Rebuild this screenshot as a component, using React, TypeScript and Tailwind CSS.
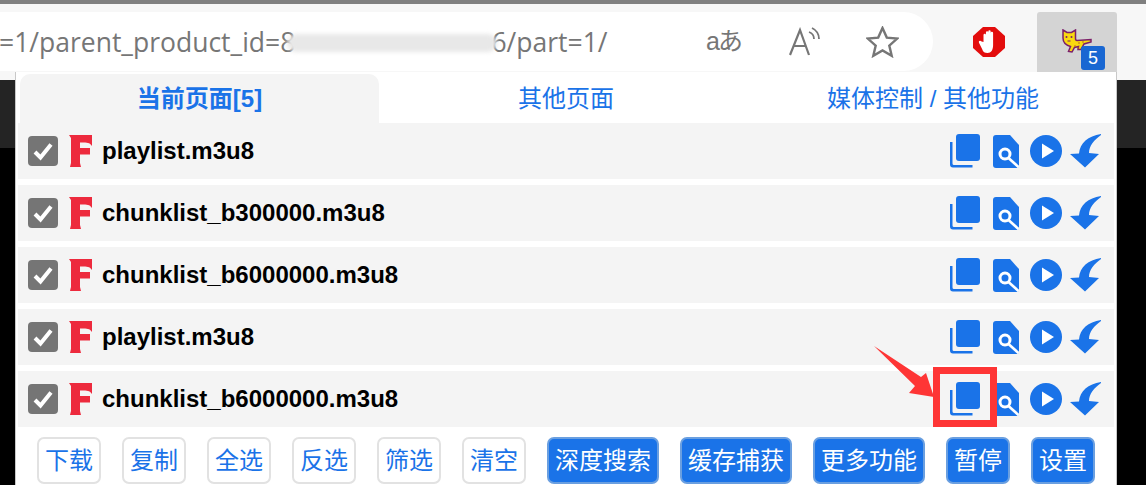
const rows = [
  "playlist.m3u8",
  "chunklist_b300000.m3u8",
  "chunklist_b6000000.m3u8",
  "playlist.m3u8",
  "chunklist_b6000000.m3u8",
];

const lightButtons = ["下载", "复制", "全选", "反选", "筛选", "清空"];
const blueButtons = [
  { label: "深度搜索", width: "w-[112px]" },
  { label: "缓存捕获", width: "w-[112px]" },
  { label: "更多功能", width: "w-[112px]" },
  { label: "暂停", width: "w-[64px]" },
  { label: "设置", width: "w-[64px]" },
];

function CopyIcon() {
  return (
    <svg width="30" height="34" viewBox="0 0 30 34" fill="#1a73e8">
      <rect x="6" y="0" width="24" height="27" rx="3" />
      <path d="M0 8h2.500v21.500a1.500 1.500 0 0 0 1.500 1.500h18.500v2.500H3a3 3 0 0 1-3-3z" />
    </svg>
  );
}

function SearchFileIcon() {
  return (
    <svg width="26" height="33" viewBox="0 0 26 33">
      <path d="M3 0h14l9 10v20a3 3 0 0 1-3 3H3a3 3 0 0 1-3-3V3a3 3 0 0 1 3-3z" fill="#1a73e8" />
      <circle cx="12" cy="19" r="5" fill="none" stroke="#fff" strokeWidth="3" />
      <path d="M15.500 23l10 9" stroke="#fff" strokeWidth="2.600" />
    </svg>
  );
}

function PlayIcon() {
  return (
    <svg width="32" height="32" viewBox="0 0 32 32">
      <circle cx="16" cy="16" r="16" fill="#1a73e8" />
      <path d="M12 8.500l12 7.500-12 7.500z" fill="#fff" />
    </svg>
  );
}

function SendIcon() {
  return (
    <svg width="32" height="34" viewBox="0 0 32 34" fill="#1a73e8">
      <path d="M31 0C18 2 10 9 9 19.500L0 20 15 33.500 29 20 19 19C19 12 24 6 31 1z" />
    </svg>
  );
}

function FileBadge() {
  return (
    <svg width="23" height="32" viewBox="0 0 23 32" fill="#ed2a3d">
      <path d="M0 0H23V11C21 8 19 7 11 7.500V13H21V19.500H11V28L12 32H1L2 28V3z" />
    </svg>
  );
}

function Checkbox() {
  return (
    <div className="flex h-[30px] w-[30px] shrink-0 items-center justify-center rounded-[4px] bg-[#757575]">
      <svg width="22" height="20" viewBox="0 0 22 20" fill="none">
        <path d="M3 11l5.500 5.500L19 3.500" stroke="#fff" strokeWidth="4" />
      </svg>
    </div>
  );
}

function Row({ name }: { name: string }) {
  return (
    <div className="flex h-14 items-center bg-[#f4f4f4] pl-[10px] pr-[12px]">
      <Checkbox />
      <div className="ml-[11px] shrink-0">
        <FileBadge />
      </div>
      <span className="ml-[10px] text-[24px] font-bold text-black">{name}</span>
      <div className="ml-auto flex items-center">
        <CopyIcon />
        <div className="ml-[13px]">
          <SearchFileIcon />
        </div>
        <div className="ml-[11px]">
          <PlayIcon />
        </div>
        <div className="ml-[8px]">
          <SendIcon />
        </div>
      </div>
    </div>
  );
}

// page background on either side of the popup
function Side({ width }: { width: string }) {
  return (
    <div className={`${width} flex shrink-0 flex-col`}>
      <div className="h-2 bg-[#f7f7f7]" />
      <div className="h-[68px] bg-[#242424]" />
      <div className="flex-1 bg-black" />
    </div>
  );
}

export default function App() {
  return (
    <div className="flex h-[485px] w-[1146px] flex-col overflow-hidden bg-[#f7f7f7] font-['Liberation_Sans','Noto_Sans_CJK_SC',sans-serif]">
      <div className="h-1 shrink-0 bg-[#808080]" />

      {/* browser toolbar */}
      <div className="flex h-[68px] shrink-0 pt-2">
        <div className="flex h-[59px] w-[933px] items-center rounded-r-[30px] bg-white">
          <span className="ml-[-1px] mt-[3px] font-['Open_Sans',sans-serif] text-[26.500px] text-[#767676]">
            =1/parent_product_id=8
          </span>
          <span className="ml-[-8px] mt-[2px] h-[18px] w-[210px] shrink-0 rounded-full bg-[#e8e8e8] blur-[2px]" />
          <span className="ml-[-6px] mt-[3px] font-['Open_Sans',sans-serif] text-[26.500px] text-[#767676]">
            6/part=1/
          </span>
          <div className="ml-auto flex items-center pr-[34px]">
            <span className="w-[34px] whitespace-nowrap text-[25px] leading-none tracking-[-2px] text-[#767676]">
              aあ
            </span>
            <svg className="ml-[49px]" width="32" height="30" viewBox="0 0 32 30" fill="none" stroke="#767676" strokeWidth="2.200">
              <path d="M1 28L11 3l9 25M5 19h12" />
              <path d="M20 5c3 1 5 4 5 7M23 1c4 2 7 6 7 11" strokeWidth="1.800" />
            </svg>
            <svg className="ml-[45px]" width="33" height="32" viewBox="0 0 33 32" fill="none" stroke="#767676" strokeWidth="2.400">
              <path d="M16.500 2l4.300 9.600 10.400 1-7.900 7 2.400 10.200-9.200-5.400-9.200 5.400 2.400-10.200-7.900-7 10.400-1z" />
            </svg>
          </div>
        </div>

        <div className="ml-10 mt-[15px]">
          <svg width="32" height="30" viewBox="0 0 32 30">
            <path d="M10 0h12l10 9v12l-10 9H10L0 21V9z" fill="#e30d0d" />
            <path
              d="M10.500 15V8a1.200 1.200 0 0 1 2.400 0V5.500a1.200 1.200 0 0 1 2.400 0V4.500a1.200 1.200 0 0 1 2.400 0V6a1.200 1.200 0 0 1 2.400 0v12c0 5-2 8-5.500 8-3 0-4.500-1-5.500-4l-3-6c-1-2 1-3 2.500-1.500z"
              fill="#fff"
            />
          </svg>
        </div>

        <div className="relative ml-[32px] h-[60px] w-20 rounded-t-[3px] bg-[#d4d4d4]">
          <svg className="absolute left-[25px] top-[17px]" width="30" height="26" viewBox="0 0 30 26">
            <path d="M1 1l4 2.500h4.500L13.500 1v8.500c0 1 .5 2 1.500 2l14-1v2.500l-7 2-3 5.500-3 0 .5-3-4 1-2.500 4.500-3.500-.5 2-5C3.500 16 1 13 1 9z" fill="#f9d90f" stroke="#7b1f6a" strokeWidth="1.500" />
            <circle cx="4.500" cy="8" r="1" fill="#7b1f6a" />
            <circle cx="9.500" cy="8" r="1" fill="#7b1f6a" />
            <path d="M5.500 12h3" stroke="#7b1f6a" />
            <circle cx="17" cy="14" r=".8" fill="#b5651d" />
            <circle cx="21" cy="13" r=".8" fill="#b5651d" />
            <circle cx="13" cy="17" r=".8" fill="#b5651d" />
            <circle cx="16" cy="19" r=".8" fill="#b5651d" />
          </svg>
          <span className="absolute left-[44px] top-[34px] flex h-6 w-6 items-center justify-center rounded-[3px] bg-[#1967d2] text-[18px] leading-none text-white">
            5
          </span>
        </div>
      </div>

      <div className="flex min-h-0 flex-1">
        <Side width="w-[15px]" />

        {/* extension popup */}
        <div className="relative w-[1102px] shrink-0 border-x border-[#c8c8c8] bg-white">
          <div className="flex h-[51px] pl-1 pr-[3px] pt-[2px]">
            <div className="flex w-[359px] items-center justify-center rounded-t-[10px] bg-[#f4f4f4] text-[24px] font-bold text-[#1a73e8]">
              当前页面[5]
            </div>
            <div className="flex w-[374px] items-center justify-center text-[24px] text-[#1a73e8]">其他页面</div>
            <div className="flex flex-1 items-center justify-center text-[24px] text-[#1a73e8]">
              媒体控制 / 其他功能
            </div>
          </div>

          <div className="flex flex-col gap-[6px] px-[2px]">
            {rows.map((name, index) => (
              <Row key={index} name={name} />
            ))}
          </div>

          <div className="mt-[10px] flex gap-[21px] pl-[21px]">
            {lightButtons.map((label) => (
              <button
                key={label}
                className="flex h-[47px] w-16 items-center justify-center rounded-[7px] border-2 border-[#e2e2e2] bg-white text-[24px] text-[#1a73e8]"
              >
                {label}
              </button>
            ))}
            {blueButtons.map((b) => (
              <button
                key={b.label}
                className={`${b.width} flex h-[47px] items-center justify-center rounded-[7px] border-2 border-[#6a9fe0] bg-[#1a73e8] text-[24px] text-white`}
              >
                {b.label}
              </button>
            ))}
          </div>

          {/* screenshot annotation */}
          <div className="absolute left-[917px] top-[295px] h-[60px] w-16 border-[7px] border-[#fe3535]" />
          <svg className="absolute left-[858px] top-[274px]" width="60" height="52" viewBox="0 0 60 52">
            <path d="M0 0L47 31 52 27 60 51 35 47 41 40z" fill="#fe3535" />
          </svg>
        </div>

        <Side width="flex-1" />
      </div>
    </div>
  );
}
